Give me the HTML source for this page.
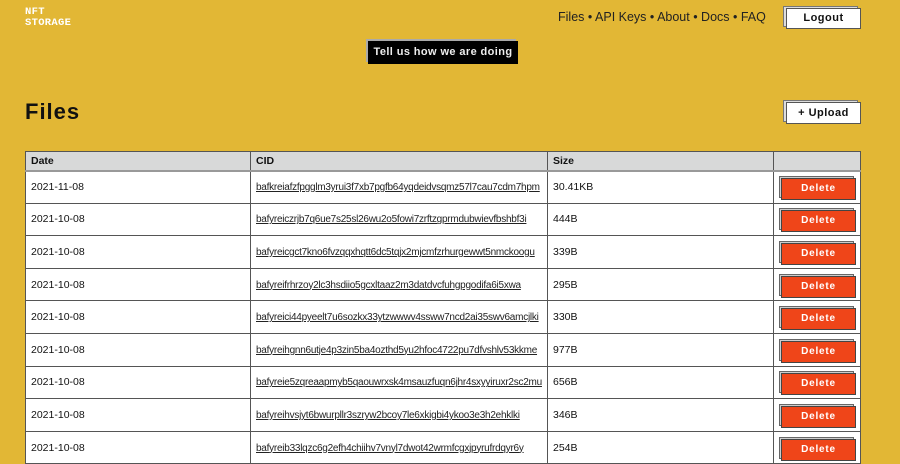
<!DOCTYPE html>
<html><head><style>
body{margin:0;width:900px;height:459px;overflow:hidden;background:#e2b735;font-family:"Liberation Sans",sans-serif;color:#111;position:relative}
.logo{position:absolute;left:25px;top:7px;color:#fff;font:bold 10.5px/11px "Liberation Mono",monospace;letter-spacing:0.3px}
.nav{position:absolute;left:558px;top:10px;font-size:12.5px;color:#222;white-space:nowrap}
.btn{position:absolute;box-sizing:border-box;border:1px solid #555;background:#fff;font:bold 11px "Liberation Sans",sans-serif;letter-spacing:0.5px;text-align:center;box-shadow:-3px -2px 0 -1px #ddd,-3px -2px 0 0 #777}
.tell{position:absolute;left:368px;top:41px;width:150px;height:23px;background:#000;color:#eee;font:bold 11px "Liberation Sans",sans-serif;letter-spacing:0.4px;white-space:nowrap;text-align:center;line-height:23px;box-shadow:-2px -2px 0 0 #aaa}
h1{position:absolute;left:25px;top:99px;margin:0;font:bold 22px "Liberation Sans",sans-serif;letter-spacing:1px}
table{position:absolute;left:25px;top:151px;width:835px;table-layout:fixed;border-collapse:collapse;background:#fff;font-size:10.5px}
th{background:#d8d9d9;text-align:left;font-weight:bold;height:19px;padding:0 5px;border:1px solid #555;border-bottom:2px solid #999;box-sizing:border-box}
td{border:1px solid #555;height:32.6px;padding:0 5px;box-sizing:border-box;white-space:nowrap;overflow:hidden}
td a{color:#222;text-decoration:underline;font-size:10px;letter-spacing:-0.25px}
.del{position:relative;width:75px;height:22px;margin-left:0}
.del:before{content:"";position:absolute;left:0;top:0;width:73px;height:20px;border:1px solid #666;background:#ccc}
.del span{position:absolute;left:2px;top:2px;width:73px;height:20px;border:1px solid #444;background:#ef4519;color:#fff;font:bold 10px/20px "Liberation Sans",sans-serif;text-align:center;letter-spacing:0.8px}
</style></head><body>
<div class="logo">NFT<br>STORAGE</div>
<div class="nav">Files • API Keys • About • Docs • FAQ</div>
<div class="btn" style="left:786px;top:8px;width:75px;height:21px;line-height:19px">Logout</div>
<div class="tell">Tell us how we are doing</div>
<h1>Files</h1>
<div class="btn" style="left:786px;top:102px;width:75px;height:22px;line-height:20px">+ Upload</div>
<table>
<colgroup><col style="width:225px"><col style="width:297px"><col style="width:226px"><col style="width:87px"></colgroup>
<tr><th>Date</th><th>CID</th><th>Size</th><th></th></tr>
<tr><td>2021-11-08</td><td><a>bafkreiafzfpgglm3yrui3f7xb7pgfb64yqdeidvsqmz57l7cau7cdm7hpm</a></td><td>30.41KB</td><td><div class="del"><span>Delete</span></div></td></tr>
<tr><td>2021-10-08</td><td><a>bafyreiczrjb7q6ue7s25sl26wu2o5fowi7zrftzgprmdubwievfbshbf3i</a></td><td>444B</td><td><div class="del"><span>Delete</span></div></td></tr>
<tr><td>2021-10-08</td><td><a>bafyreicgct7kno6fvzqqxhqtt6dc5tqjx2mjcmfzrhurgewwt5nmckoogu</a></td><td>339B</td><td><div class="del"><span>Delete</span></div></td></tr>
<tr><td>2021-10-08</td><td><a>bafyreifrhrzoy2lc3hsdiio5gcxltaaz2m3datdvcfuhgpgodifa6i5xwa</a></td><td>295B</td><td><div class="del"><span>Delete</span></div></td></tr>
<tr><td>2021-10-08</td><td><a>bafyreici44pyeelt7u6sozkx33ytzwwwv4ssww7ncd2ai35swv6amcjlki</a></td><td>330B</td><td><div class="del"><span>Delete</span></div></td></tr>
<tr><td>2021-10-08</td><td><a>bafyreihgnn6utje4p3zin5ba4ozthd5yu2hfoc4722pu7dfvshlv53kkme</a></td><td>977B</td><td><div class="del"><span>Delete</span></div></td></tr>
<tr><td>2021-10-08</td><td><a>bafyreie5zqreaapmyb5qaouwrxsk4msauzfuqn6jhr4sxyyiruxr2sc2mu</a></td><td>656B</td><td><div class="del"><span>Delete</span></div></td></tr>
<tr><td>2021-10-08</td><td><a>bafyreihvsjyt6bwurpllr3szryw2bcoy7le6xkigbi4ykoo3e3h2ehklki</a></td><td>346B</td><td><div class="del"><span>Delete</span></div></td></tr>
<tr><td>2021-10-08</td><td><a>bafyreib33lqzc6g2efh4chiihv7vnyl7dwot42wrmfcgxjpyrufrdqyr6y</a></td><td>254B</td><td><div class="del"><span>Delete</span></div></td></tr>
</table>
</body></html>
